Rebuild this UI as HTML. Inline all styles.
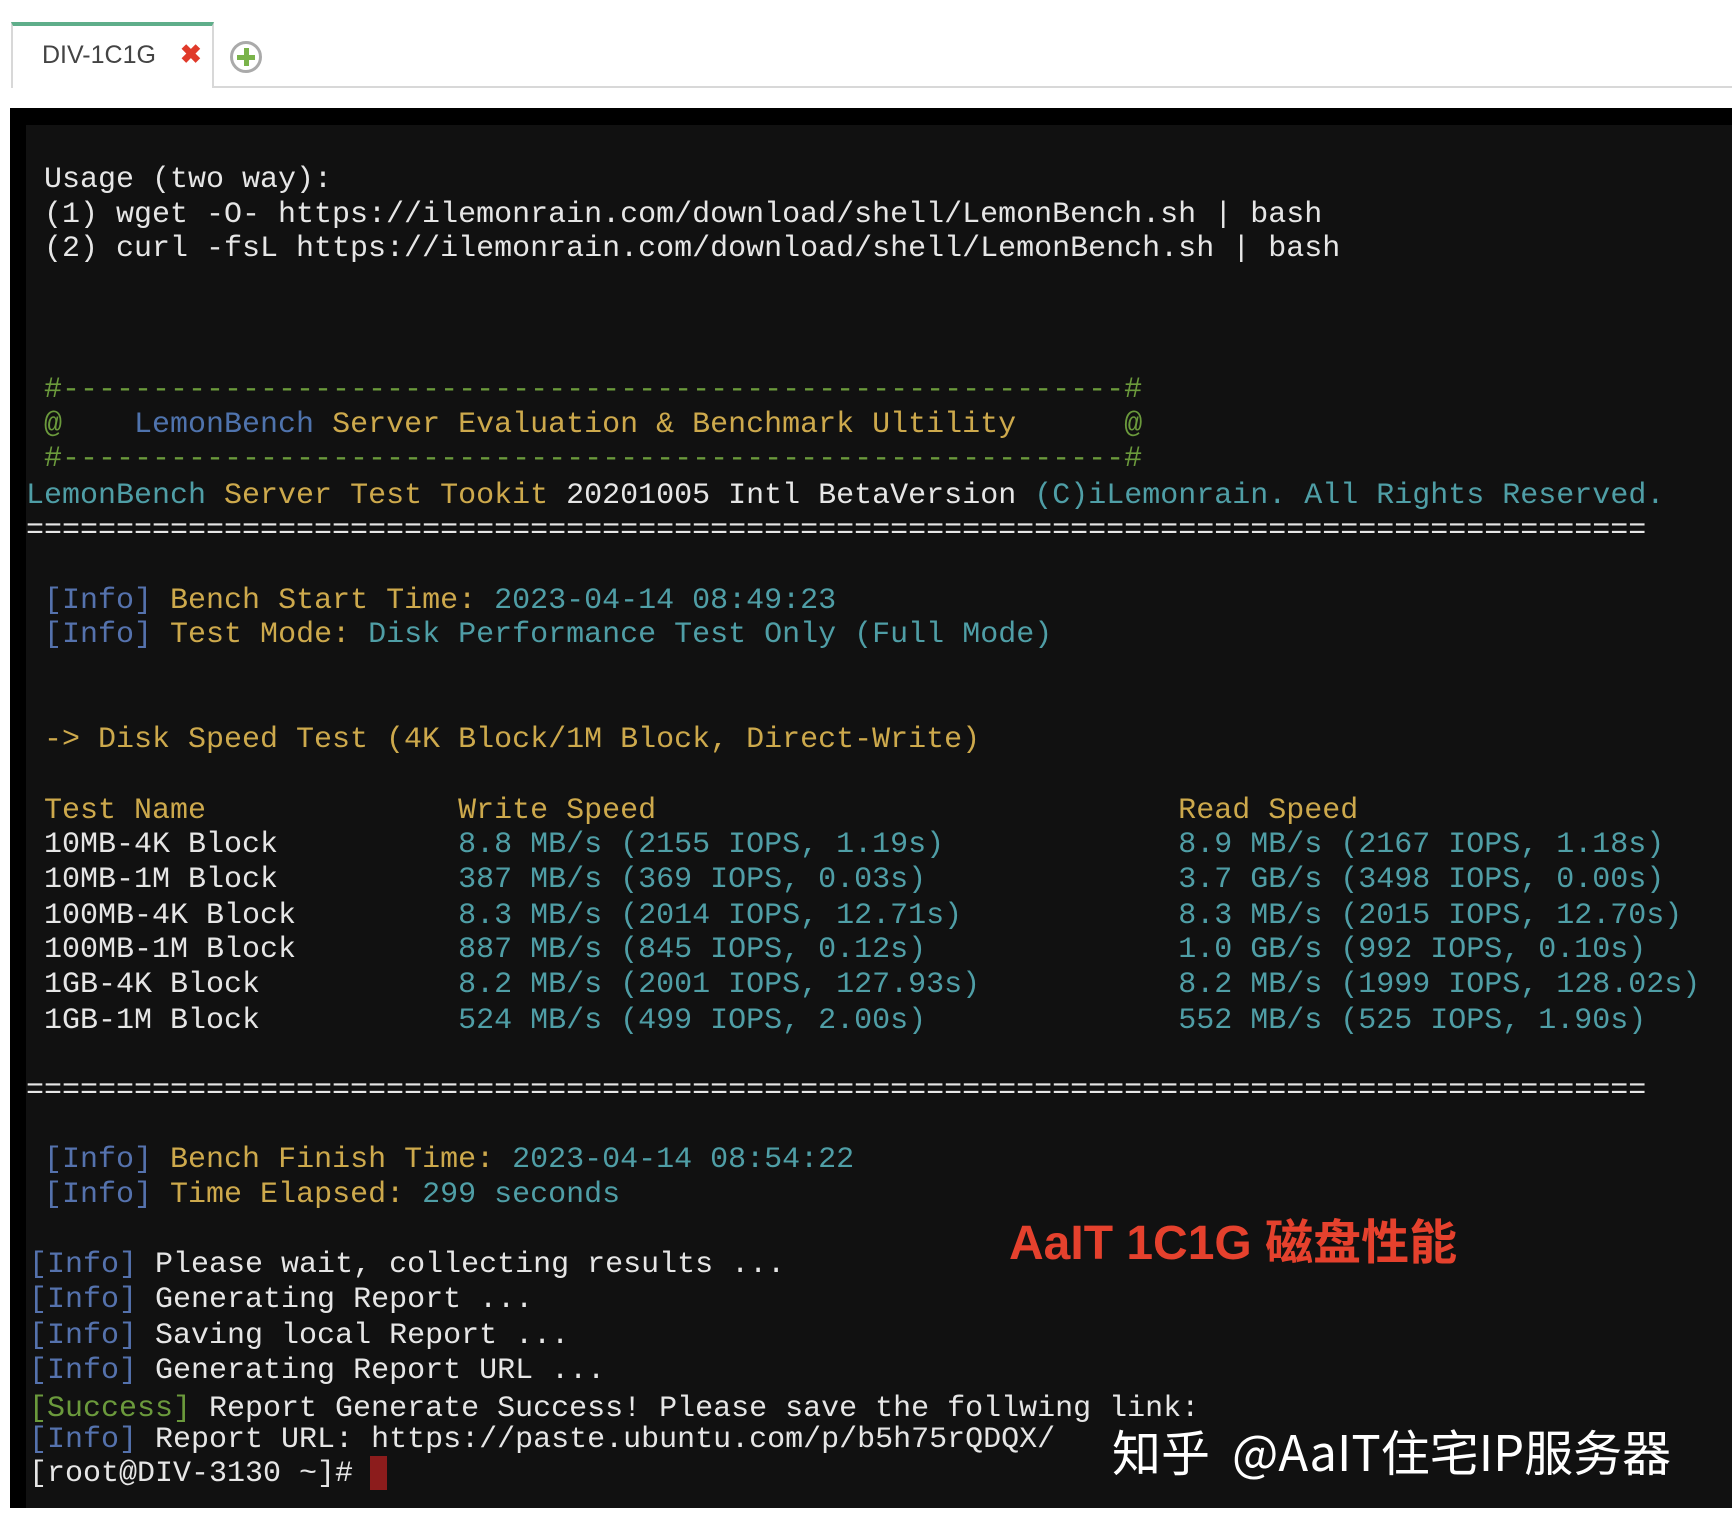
<!DOCTYPE html>
<html><head><meta charset="utf-8"><style>
*{margin:0;padding:0;box-sizing:border-box}
body{width:1732px;height:1522px;background:#fff;position:relative;overflow:hidden;font-family:"Liberation Sans",sans-serif}
.tab{position:absolute;left:11px;top:22px;width:203px;height:66px;border-left:2px solid #d8d8d8;border-right:2px solid #d8d8d8;border-top:4px solid #5fae8a;background:#fff}
.tab span{position:absolute;left:29px;top:15px;font-size:25px;color:#444}
.tab b{position:absolute;left:167px;top:13px;font-size:26px;color:#e03a2a;font-weight:bold}
.line{position:absolute;left:214px;right:0;top:86px;height:2px;background:#d8d8d8}
.plus{position:absolute;left:230px;top:41px;width:32px;height:32px;border:3px solid #aaa;border-radius:50%}
.plus:before{content:"";position:absolute;left:11px;top:4px;width:5px;height:18px;background:#7ab34a}
.plus:after{content:"";position:absolute;left:4px;top:11px;width:18px;height:5px;background:#7ab34a}
.term{position:absolute;left:10px;top:108px;right:0;height:1400px;background:#000}
.inner{position:absolute;left:26px;top:125px;right:0;height:1383px;background:#111}
.l{position:absolute;font-family:"Liberation Mono",monospace;font-size:30px;line-height:35px;height:35px;white-space:pre;color:#e6e6e6}
.g{color:#6b9a3c}.b{color:#4f73ad}.y{color:#cda94c}.c{color:#4f9ea6}.w{color:#e6e6e6}.ib{color:#5572ad}
.red{position:absolute;left:1009px;top:1203px;font-size:48px;font-weight:bold;color:#e5412d;font-family:"Liberation Sans","Noto Sans CJK SC",sans-serif;white-space:nowrap}
.zh{position:absolute;left:1112px;top:1419px;font-size:49px;color:#fff;font-family:"Noto Sans CJK SC",sans-serif;white-space:nowrap;line-height:64px}
.cur{position:absolute;left:370px;top:1456px;width:17px;height:34px;background:#8c1c1c}
</style></head><body>
<div class="tab"><span>DIV-1C1G</span><b>✖</b></div>
<div class="line"></div>
<div class="plus"></div>
<div class="term"></div><div class="inner"></div>

<div class="l w" style="left:44px;top:163px">Usage (two way):</div>
<div class="l w" style="left:44px;top:198px">(1) wget -O- https://ilemonrain.com/download/shell/LemonBench.sh | bash</div>
<div class="l w" style="left:44px;top:232px">(2) curl -fsL https://ilemonrain.com/download/shell/LemonBench.sh | bash</div>

<div class="l g" style="left:44px;top:373px">#-----------------------------------------------------------#</div>
<div class="l" style="left:44px;top:408px"><span class="g">@</span>    <span class="b">LemonBench</span> <span class="y">Server Evaluation &amp; Benchmark Ultility</span>      <span class="g">@</span></div>
<div class="l g" style="left:44px;top:442px">#-----------------------------------------------------------#</div>
<div class="l" style="left:26px;top:479px"><span class="c">LemonBench</span> <span class="y">Server Test Tookit</span> <span class="w">20201005 Intl BetaVersion</span> <span class="c">(C)iLemonrain. All Rights Reserved.</span></div>
<div class="l w" style="left:26px;top:514px">==========================================================================================</div>

<div class="l" style="left:44px;top:584px"><span class="ib">[Info]</span> <span class="y">Bench Start Time:</span> <span class="c">2023-04-14 08:49:23</span></div>
<div class="l" style="left:44px;top:618px"><span class="ib">[Info]</span> <span class="y">Test Mode:</span> <span class="c">Disk Performance Test Only (Full Mode)</span></div>

<div class="l y" style="left:44px;top:723px">-&gt; Disk Speed Test (4K Block/1M Block, Direct-Write)</div>

<div class="l y" style="left:44px;top:794px">Test Name              Write Speed                             Read Speed</div>
<div class="l" style="left:44px;top:828px"><span class="w">10MB-4K Block          </span><span class="c">8.8 MB/s (2155 IOPS, 1.19s)             8.9 MB/s (2167 IOPS, 1.18s)</span></div>
<div class="l" style="left:44px;top:863px"><span class="w">10MB-1M Block          </span><span class="c">387 MB/s (369 IOPS, 0.03s)              3.7 GB/s (3498 IOPS, 0.00s)</span></div>
<div class="l" style="left:44px;top:899px"><span class="w">100MB-4K Block         </span><span class="c">8.3 MB/s (2014 IOPS, 12.71s)            8.3 MB/s (2015 IOPS, 12.70s)</span></div>
<div class="l" style="left:44px;top:933px"><span class="w">100MB-1M Block         </span><span class="c">887 MB/s (845 IOPS, 0.12s)              1.0 GB/s (992 IOPS, 0.10s)</span></div>
<div class="l" style="left:44px;top:968px"><span class="w">1GB-4K Block           </span><span class="c">8.2 MB/s (2001 IOPS, 127.93s)           8.2 MB/s (1999 IOPS, 128.02s)</span></div>
<div class="l" style="left:44px;top:1004px"><span class="w">1GB-1M Block           </span><span class="c">524 MB/s (499 IOPS, 2.00s)              552 MB/s (525 IOPS, 1.90s)</span></div>

<div class="l w" style="left:26px;top:1074px">==========================================================================================</div>

<div class="l" style="left:44px;top:1143px"><span class="ib">[Info]</span> <span class="y">Bench Finish Time:</span> <span class="c">2023-04-14 08:54:22</span></div>
<div class="l" style="left:44px;top:1178px"><span class="ib">[Info]</span> <span class="y">Time Elapsed:</span> <span class="c">299 seconds</span></div>

<div class="l" style="left:29px;top:1248px"><span class="ib">[Info]</span> Please wait, collecting results ...</div>
<div class="l" style="left:29px;top:1283px"><span class="ib">[Info]</span> Generating Report ...</div>
<div class="l" style="left:29px;top:1319px"><span class="ib">[Info]</span> Saving local Report ...</div>
<div class="l" style="left:29px;top:1354px"><span class="ib">[Info]</span> Generating Report URL ...</div>
<div class="l" style="left:29px;top:1392px"><span class="g">[Success]</span> Report Generate Success! Please save the follwing link:</div>
<div class="l" style="left:29px;top:1423px"><span class="ib">[Info]</span> Report URL: https://paste.ubuntu.com/p/b5h75rQDQX/</div>
<div class="l w" style="left:29px;top:1457px">[root@DIV-3130 ~]#</div>
<div class="cur"></div>

<div class="red">AaIT 1C1G 磁盘性能</div>
<div class="zh">知乎<span style="margin-left:22px">@AaIT住宅IP服务器</span></div>
</body></html>
